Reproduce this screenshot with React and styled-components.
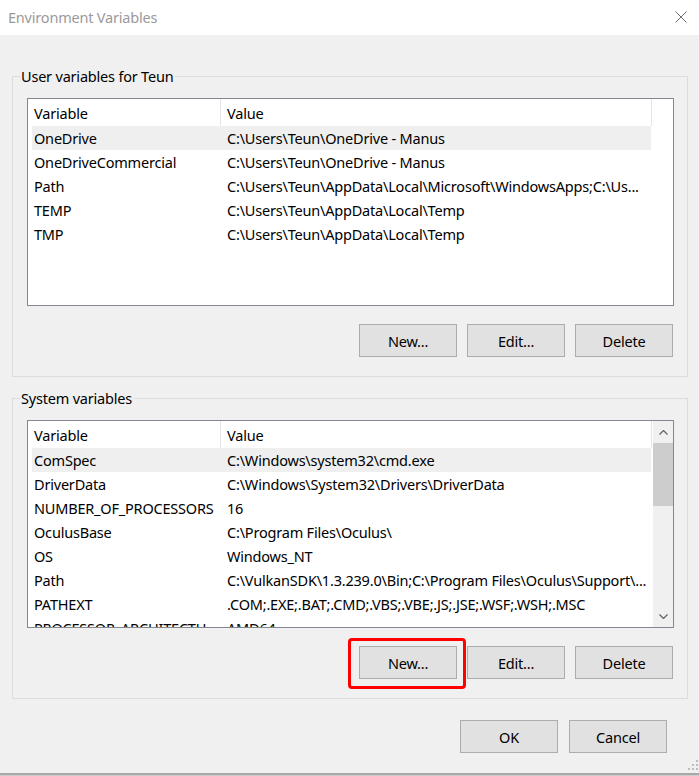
import React from 'react';
import styled, { createGlobalStyle } from 'styled-components';

const GlobalStyle = createGlobalStyle`
  html, body {
    margin: 0;
    padding: 0;
    background: #ffffff;
  }
  body {
    font-family: "Noto Sans", "Liberation Sans", sans-serif;
    font-size: 14.5px;
    letter-spacing: -0.2px;
    color: #000;
  }
  * {
    box-sizing: border-box;
  }
`;

const userVars = [
  ['OneDrive', 'C:\\Users\\Teun\\OneDrive - Manus'],
  ['OneDriveCommercial', 'C:\\Users\\Teun\\OneDrive - Manus'],
  ['Path', 'C:\\Users\\Teun\\AppData\\Local\\Microsoft\\WindowsApps;C:\\Us...'],
  ['TEMP', 'C:\\Users\\Teun\\AppData\\Local\\Temp'],
  ['TMP', 'C:\\Users\\Teun\\AppData\\Local\\Temp'],
];

const systemVars = [
  ['ComSpec', 'C:\\Windows\\system32\\cmd.exe'],
  ['DriverData', 'C:\\Windows\\System32\\Drivers\\DriverData'],
  ['NUMBER_OF_PROCESSORS', '16'],
  ['OculusBase', 'C:\\Program Files\\Oculus\\'],
  ['OS', 'Windows_NT'],
  ['Path', 'C:\\VulkanSDK\\1.3.239.0\\Bin;C:\\Program Files\\Oculus\\Support\\...'],
  ['PATHEXT', '.COM;.EXE;.BAT;.CMD;.VBS;.VBE;.JS;.JSE;.WSF;.WSH;.MSC'],
  ['PROCESSOR_ARCHITECTURE', 'AMD64'],
];

function Chevron({ up }) {
  return (
    <svg width="9" height="5" viewBox="0 0 9 5">
      <polyline
        points={up ? '0.5,4.5 4.5,0.5 8.5,4.5' : '0.5,0.5 4.5,4.5 8.5,0.5'}
        fill="none"
        stroke="#606060"
        strokeWidth="1.2"
      />
    </svg>
  );
}

function VarList({ rows, scroll }) {
  return (
    <ListBox>
      <ListMain>
        <HeaderRow>
          <HeaderCell $w={193}>Variable</HeaderCell>
          <HeaderCell $w={431}>Value</HeaderCell>
          <HeaderFill />
        </HeaderRow>
        <Rows>
          {rows.map(([name, value], i) => (
            <Row key={name + i} $selected={i === 0}>
              <NameCell>{name}</NameCell>
              <ValueCell>{value}</ValueCell>
            </Row>
          ))}
        </Rows>
      </ListMain>
      {scroll && (
        <Scrollbar>
          <ArrowBox>
            <Chevron up />
          </ArrowBox>
          <Track>
            <Thumb />
          </Track>
          <ArrowBox>
            <Chevron />
          </ArrowBox>
        </Scrollbar>
      )}
    </ListBox>
  );
}

export default function App() {
  return (
    <>
      <GlobalStyle />
      <Window>
        <TitleBar>
          <Title>Environment Variables</Title>
          <CloseIcon width="12" height="12" viewBox="0 0 12 12">
            <path d="M0.5 0.5 L11.5 11.5 M11.5 0.5 L0.5 11.5" stroke="#6d6d6d" strokeWidth="1" />
          </CloseIcon>
        </TitleBar>
        <Body>
          <Group>
            <Legend>User variables for Teun</Legend>
            <GroupInner>
              <VarList rows={userVars} />
              <ButtonRow>
                <Button>New...</Button>
                <Button>Edit...</Button>
                <Button>Delete</Button>
              </ButtonRow>
            </GroupInner>
          </Group>
          <Group $second>
            <Legend>System variables</Legend>
            <GroupInner>
              <VarList rows={systemVars} scroll />
              <ButtonRow>
                <Highlight>
                  <Button>New...</Button>
                </Highlight>
                <Button>Edit...</Button>
                <Button>Delete</Button>
              </ButtonRow>
            </GroupInner>
          </Group>
          <Footer>
            <Button>OK</Button>
            <Button>Cancel</Button>
          </Footer>
          <Grip width="11" height="11" viewBox="0 0 11 11">
            <rect x="8" y="0" width="2" height="2" />
            <rect x="4" y="4" width="2" height="2" />
            <rect x="8" y="4" width="2" height="2" />
            <rect x="0" y="8" width="2" height="2" />
            <rect x="4" y="8" width="2" height="2" />
            <rect x="8" y="8" width="2" height="2" />
          </Grip>
        </Body>
        <BottomEdge />
      </Window>
    </>
  );
}

const Window = styled.div`
  width: 699px;
  height: 776px;
  display: flex;
  flex-direction: column;
  overflow: hidden;
`;

const TitleBar = styled.div`
  height: 35px;
  flex: none;
  background: #ffffff;
  display: flex;
  align-items: center;
  justify-content: space-between;
  padding: 0 12px 2px 8px;
`;

const Title = styled.div`
  color: #9a9a9a;
`;

const CloseIcon = styled.svg`
  display: block;
  margin-top: 1px;
`;

const Body = styled.div`
  position: relative;
  flex: 1;
  background: #f0f0f0;
  display: flex;
  flex-direction: column;
  padding-top: 31px;
`;

const BottomEdge = styled.div`
  height: 3px;
  flex: none;
  border-top: 2px solid #a8a8a8;
  background: #cdcdcd;
`;

const Group = styled.fieldset`
  margin: ${(p) => (p.$second ? '11px' : '0')} 11px 0 12px;
  padding: 0;
  min-width: 0;
  border: 1px solid #dcdcdc;
`;

const Legend = styled.legend`
  margin-left: 7px;
  padding: 0 2px 0 1px;
  line-height: 20px;
`;

const GroupInner = styled.div`
  padding: 12px 13px 19px 14px;
`;

const ListBox = styled.div`
  height: 208px;
  border: 1px solid #828790;
  background: #ffffff;
  display: flex;
  overflow: hidden;
`;

const ListMain = styled.div`
  flex: 1;
  min-width: 0;
  display: flex;
  flex-direction: column;
`;

const HeaderRow = styled.div`
  height: 27px;
  flex: none;
  display: flex;
`;

const HeaderCell = styled.div`
  width: ${(p) => p.$w}px;
  flex: none;
  border-right: 1px solid #e5e5e5;
  padding-left: 6px;
  display: flex;
  align-items: center;
  white-space: nowrap;
`;

const HeaderFill = styled.div`
  flex: 1;
`;

const Rows = styled.div`
  padding-left: 4px;
  overflow: hidden;
`;

const Row = styled.div`
  width: 619px;
  height: 24px;
  display: flex;
  align-items: center;
  background: ${(p) => (p.$selected ? '#efefef' : 'transparent')};
`;

const NameCell = styled.div`
  width: 188px;
  flex: none;
  padding: 0 2px 0 2px;
  white-space: nowrap;
  overflow: hidden;
  text-overflow: ellipsis;
`;

const ValueCell = styled.div`
  width: 431px;
  flex: none;
  padding: 0 4px 0 7px;
  white-space: nowrap;
  overflow: hidden;
  text-overflow: ellipsis;
`;

const Scrollbar = styled.div`
  width: 21px;
  flex: none;
  background: #f0f0f0;
  border-left: 1px solid #ffffff;
  display: flex;
  flex-direction: column;
`;

const ArrowBox = styled.div`
  height: 22px;
  flex: none;
  display: flex;
  align-items: center;
  justify-content: center;
`;

const Track = styled.div`
  flex: 1;
`;

const Thumb = styled.div`
  height: 63px;
  background: #cdcdcd;
`;

const ButtonRow = styled.div`
  display: flex;
  justify-content: flex-end;
  gap: 10px;
  margin-top: 18px;
  padding-right: 1px;
`;

const Footer = styled.div`
  display: flex;
  justify-content: flex-end;
  gap: 11px;
  margin-top: 21px;
  padding-right: 32px;
`;

const Button = styled.button`
  width: 98px;
  height: 33px;
  padding: 0;
  background: #e1e1e1;
  border: 1px solid #adadad;
  border-radius: 0;
  font-family: inherit;
  font-size: 14.5px;
  letter-spacing: -0.2px;
  color: #000;
`;

const Highlight = styled.span`
  position: relative;
  display: inline-flex;
  &::after {
    content: '';
    position: absolute;
    top: -8px;
    left: -11px;
    right: -9px;
    bottom: -10px;
    border: 3px solid #ff0000;
    border-radius: 4px;
    pointer-events: none;
  }
`;

const Grip = styled.svg`
  position: absolute;
  right: 0;
  bottom: 2px;
  fill: #bdbdbd;
`;
